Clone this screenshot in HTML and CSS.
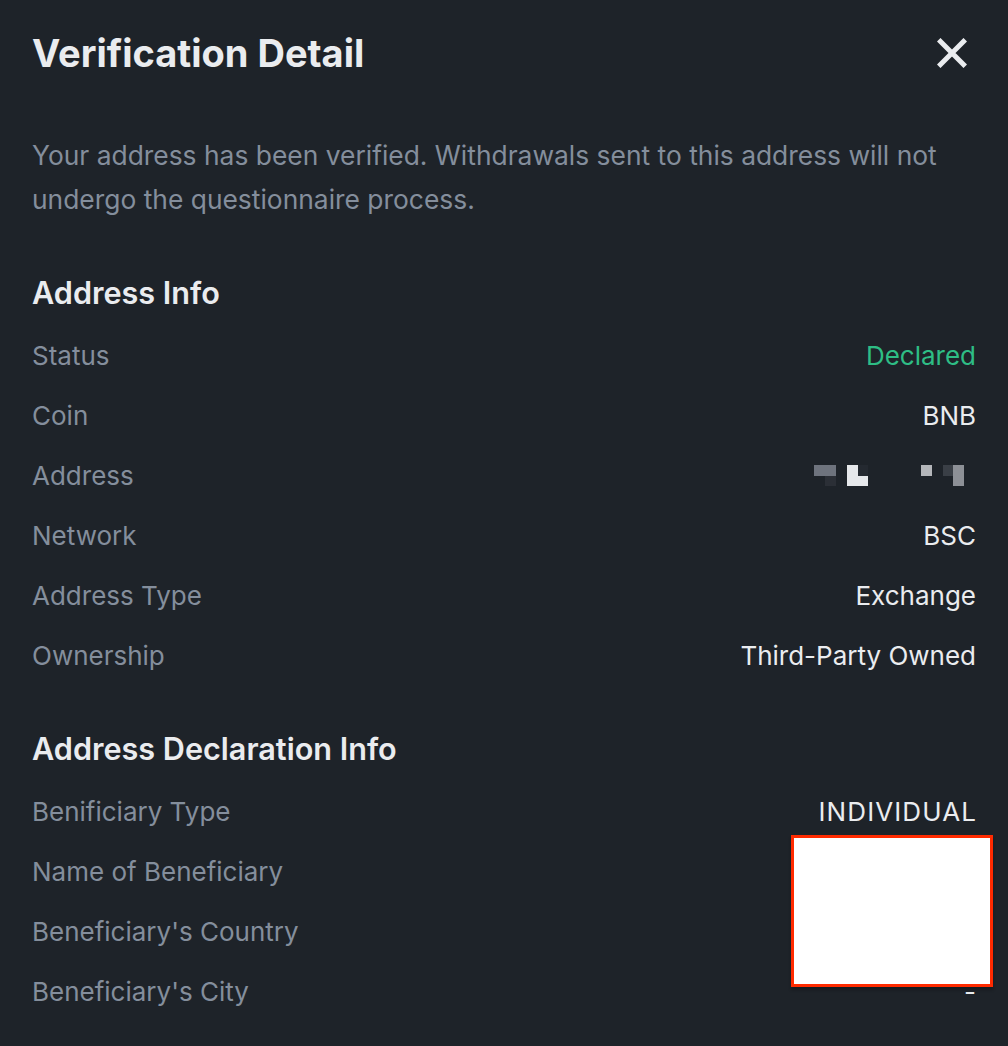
FILE: index.html
```html
<!DOCTYPE html>
<html>
<head>
<meta charset="utf-8">
<link rel="stylesheet" href="styles.css">
</head>
<body>
<div class="modal">
  <div class="header">
    <h1 class="title">Verification Detail</h1>
    <button class="close" aria-label="Close">
      <svg width="30" height="30" viewBox="0 0 30 30"><path d="M3.5 3.5 L26.5 26.5 M26.5 3.5 L3.5 26.5" stroke="#EAECEF" stroke-width="5" stroke-linecap="square"/></svg>
    </button>
  </div>
  <p class="desc">Your address has been verified. Withdrawals sent to this address will not undergo the questionnaire process.</p>

  <h2 class="section-title">Address Info</h2>
  <div class="rows">
    <div class="row"><span class="label">Status</span><span class="value green">Declared</span></div>
    <div class="row"><span class="label">Coin</span><span class="value">BNB</span></div>
    <div class="row"><span class="label">Address</span>
      <span class="value">
        <svg class="pix" width="162" height="21" viewBox="0 0 162 21">
          <rect x="0" y="0" width="22" height="11" fill="#6e737d"/>
          <rect x="11" y="11" width="11" height="10" fill="#2b2f36"/>
          <rect x="33" y="0" width="11" height="21" fill="#e6e8eb"/>
          <rect x="44" y="11" width="10" height="10" fill="#e6e8eb"/>
          <rect x="44" y="0" width="10" height="11" fill="#242930"/>
          <rect x="107" y="0" width="11" height="11" fill="#b4b6ba"/>
          <rect x="129" y="0" width="10" height="11" fill="#3a3f46"/>
          <rect x="139" y="0" width="11" height="21" fill="#8d9096"/>
        </svg>
      </span>
    </div>
    <div class="row"><span class="label">Network</span><span class="value">BSC</span></div>
    <div class="row"><span class="label">Address Type</span><span class="value">Exchange</span></div>
    <div class="row"><span class="label">Ownership</span><span class="value">Third-Party Owned</span></div>
  </div>

  <h2 class="section-title second">Address Declaration Info</h2>
  <div class="rows">
    <div class="row"><span class="label">Benificiary Type</span><span class="value caps">INDIVIDUAL</span></div>
    <div class="row"><span class="label">Name of Beneficiary</span><span class="value"></span></div>
    <div class="row"><span class="label">Beneficiary's Country</span><span class="value"></span></div>
    <div class="row"><span class="label">Beneficiary's City</span><span class="value">-</span></div>
  </div>

  <div class="redact"></div>
</div>
</body>
</html>
```
FILE: styles.css
```css
html, body {
  margin: 0;
  padding: 0;
  background: #1E2329;
}
body {
  font-family: Inter, "Noto Sans", sans-serif;
  color: #EAECEF;
  width: 1008px;
  height: 1046px;
  overflow: hidden;
}
.modal {
  position: relative;
  padding: 29px 32px 0 32px;
}
.header {
  display: flex;
  justify-content: space-between;
  align-items: center;
  height: 48px;
}
.title {
  margin: 0;
  font-size: 38px;
  font-weight: 700;
  line-height: 48px;
  color: #EAECEF;
}
.close {
  background: none;
  border: none;
  padding: 0;
  margin-right: 9px;
  width: 30px;
  height: 30px;
  display: flex;
}
.desc {
  margin: 56px 0 0;
  font-size: 26.4px;
  line-height: 44px;
  color: #848E9C;
}
.section-title {
  margin: 52px 0 12px;
  font-size: 30.6px;
  font-weight: 600;
  line-height: 40px;
  color: #EAECEF;
}
.section-title.second {
  margin-top: 44px;
}
.row {
  display: flex;
  justify-content: space-between;
  align-items: center;
  height: 60px;
  font-size: 26px;
}
.label {
  color: #848E9C;
}
.value {
  color: #EAECEF;
  display: flex;
}
.value.caps {
  letter-spacing: 1.1px;
  margin-right: -1px;
}
.value.green {
  color: #2EBD85;
}
.redact {
  position: absolute;
  left: 791px;
  top: 835px;
  width: 196px;
  height: 146px;
  background: #fff;
  border: 3px solid #FF2A00;
  box-shadow: 0 3px 3px rgba(0,0,0,0.25);
}
```
